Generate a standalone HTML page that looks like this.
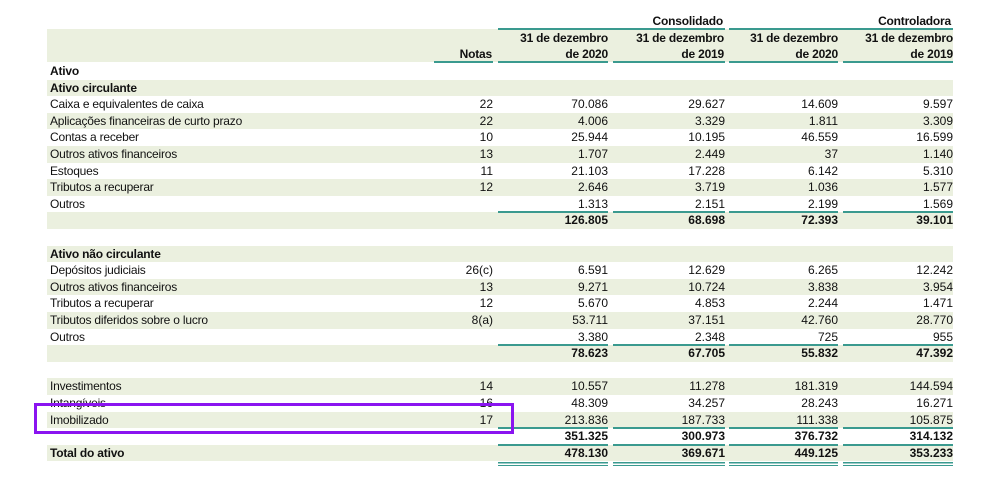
<!DOCTYPE html>
<html><head><meta charset="utf-8"><style>
*{margin:0;padding:0;box-sizing:border-box}
body{width:1000px;height:483px;background:#fff;font-family:"Liberation Sans",Arial,sans-serif;font-size:12px;color:#111;position:relative;overflow:hidden}
.r{position:absolute;left:47px;width:906px;height:16.6px;line-height:16.6px}
.g{background:#ebf0df}
.r span{position:absolute;top:0}
.l{left:3px;letter-spacing:-0.2px}
.n{right:460px;text-align:right}
.c1{right:345px}.c2{right:228px}.c3{right:115px}.c4{right:0}
b{font-weight:bold}
.ln{position:absolute;height:2px;background:#3a9a8f}
.hd{position:absolute;font-weight:bold;text-align:right;line-height:16px;letter-spacing:-0.2px}
</style></head><body>
<div style="position:absolute;left:47px;top:29px;width:906px;height:33px;background:#ebf0df"></div>
<div class="hd" style="right:277px;top:13px">Consolidado</div>
<div class="hd" style="right:49px;top:13px">Controladora</div>
<div class="ln" style="left:498px;width:227px;top:28px"></div>
<div class="ln" style="left:729px;width:224px;top:28px"></div>
<div class="hd" style="right:508px;top:46px">Notas</div>
<div class="hd" style="right:392px;top:30px">31 de dezembro<br>de 2020</div>
<div class="hd" style="right:276px;top:30px">31 de dezembro<br>de 2019</div>
<div class="hd" style="right:162px;top:30px">31 de dezembro<br>de 2020</div>
<div class="hd" style="right:47px;top:30px">31 de dezembro<br>de 2019</div>
<div class="ln" style="left:434px;width:59px;top:61px"></div>
<div class="ln" style="left:498px;width:110px;top:61px"></div>
<div class="ln" style="left:613px;width:112px;top:61px"></div>
<div class="ln" style="left:729px;width:109px;top:61px"></div>
<div class="ln" style="left:843px;width:110px;top:61px"></div>

<div class="r" style="top:63px"><span class="l"><b>Ativo</b></span></div>
<div class="r g" style="top:79.6px"><span class="l"><b>Ativo circulante</b></span></div>
<div class="r" style="top:96.2px"><span class="l">Caixa e equivalentes de caixa</span><span class="n">22</span><span class="c1">70.086</span><span class="c2">29.627</span><span class="c3">14.609</span><span class="c4">9.597</span></div>
<div class="r g" style="top:112.8px"><span class="l">Aplicações financeiras de curto prazo</span><span class="n">22</span><span class="c1">4.006</span><span class="c2">3.329</span><span class="c3">1.811</span><span class="c4">3.309</span></div>
<div class="r" style="top:129.4px"><span class="l">Contas a receber</span><span class="n">10</span><span class="c1">25.944</span><span class="c2">10.195</span><span class="c3">46.559</span><span class="c4">16.599</span></div>
<div class="r g" style="top:146px"><span class="l">Outros ativos financeiros</span><span class="n">13</span><span class="c1">1.707</span><span class="c2">2.449</span><span class="c3">37</span><span class="c4">1.140</span></div>
<div class="r" style="top:162.6px"><span class="l">Estoques</span><span class="n">11</span><span class="c1">21.103</span><span class="c2">17.228</span><span class="c3">6.142</span><span class="c4">5.310</span></div>
<div class="r g" style="top:179.2px"><span class="l">Tributos a recuperar</span><span class="n">12</span><span class="c1">2.646</span><span class="c2">3.719</span><span class="c3">1.036</span><span class="c4">1.577</span></div>
<div class="r" style="top:195.8px"><span class="l">Outros</span><span class="c1">1.313</span><span class="c2">2.151</span><span class="c3">2.199</span><span class="c4">1.569</span></div>
<div class="r g" style="top:212.4px"><b><span class="c1">126.805</span><span class="c2">68.698</span><span class="c3">72.393</span><span class="c4">39.101</span></b></div>
<div class="r" style="top:229px"></div>
<div class="r g" style="top:245.6px"><span class="l"><b>Ativo não circulante</b></span></div>
<div class="r" style="top:262.2px"><span class="l">Depósitos judiciais</span><span class="n">26(c)</span><span class="c1">6.591</span><span class="c2">12.629</span><span class="c3">6.265</span><span class="c4">12.242</span></div>
<div class="r g" style="top:278.8px"><span class="l">Outros ativos financeiros</span><span class="n">13</span><span class="c1">9.271</span><span class="c2">10.724</span><span class="c3">3.838</span><span class="c4">3.954</span></div>
<div class="r" style="top:295.4px"><span class="l">Tributos a recuperar</span><span class="n">12</span><span class="c1">5.670</span><span class="c2">4.853</span><span class="c3">2.244</span><span class="c4">1.471</span></div>
<div class="r g" style="top:312px"><span class="l">Tributos diferidos sobre o lucro</span><span class="n">8(a)</span><span class="c1">53.711</span><span class="c2">37.151</span><span class="c3">42.760</span><span class="c4">28.770</span></div>
<div class="r" style="top:328.6px"><span class="l">Outros</span><span class="c1">3.380</span><span class="c2">2.348</span><span class="c3">725</span><span class="c4">955</span></div>
<div class="r g" style="top:345.2px"><b><span class="c1">78.623</span><span class="c2">67.705</span><span class="c3">55.832</span><span class="c4">47.392</span></b></div>
<div class="r g" style="top:378.4px"><span class="l">Investimentos</span><span class="n">14</span><span class="c1">10.557</span><span class="c2">11.278</span><span class="c3">181.319</span><span class="c4">144.594</span></div>
<div class="r" style="top:395px"><span class="l">Intangíveis</span><span class="n">16</span><span class="c1">48.309</span><span class="c2">34.257</span><span class="c3">28.243</span><span class="c4">16.271</span></div>
<div class="r g" style="top:411.6px"><span class="l">Imobilizado</span><span class="n">17</span><span class="c1">213.836</span><span class="c2">187.733</span><span class="c3">111.338</span><span class="c4">105.875</span></div>
<div class="r" style="top:428.2px"><b><span class="c1">351.325</span><span class="c2">300.973</span><span class="c3">376.732</span><span class="c4">314.132</span></b></div>
<div class="r g" style="top:444.8px"><span class="l"><b>Total do ativo</b></span><b><span class="c1">478.130</span><span class="c2">369.671</span><span class="c3">449.125</span><span class="c4">353.233</span></b></div>

<div class="ln" style="left:498px;width:110px;top:211px"></div><div class="ln" style="left:613px;width:112px;top:211px"></div><div class="ln" style="left:729px;width:109px;top:211px"></div><div class="ln" style="left:843px;width:110px;top:211px"></div>
<div class="ln" style="left:498px;width:110px;top:344px"></div><div class="ln" style="left:613px;width:112px;top:344px"></div><div class="ln" style="left:729px;width:109px;top:344px"></div><div class="ln" style="left:843px;width:110px;top:344px"></div>
<div class="ln" style="left:498px;width:110px;top:427px"></div><div class="ln" style="left:613px;width:112px;top:427px"></div><div class="ln" style="left:729px;width:109px;top:427px"></div><div class="ln" style="left:843px;width:110px;top:427px"></div>
<div class="ln" style="left:498px;width:110px;top:443.5px"></div><div class="ln" style="left:613px;width:112px;top:443.5px"></div><div class="ln" style="left:729px;width:109px;top:443.5px"></div><div class="ln" style="left:843px;width:110px;top:443.5px"></div>
<div class="ln" style="left:498px;width:110px;top:462px;height:4px;border-bottom:1px solid #3a9a8f;background:linear-gradient(#3a9a8f 50%,#fff 50%)"></div><div class="ln" style="left:613px;width:112px;top:462px;height:4px;background:linear-gradient(#3a9a8f 50%,#fff 50%);border-bottom:1px solid #3a9a8f"></div><div class="ln" style="left:729px;width:109px;top:462px;height:4px;background:linear-gradient(#3a9a8f 50%,#fff 50%);border-bottom:1px solid #3a9a8f"></div><div class="ln" style="left:843px;width:110px;top:462px;height:4px;background:linear-gradient(#3a9a8f 50%,#fff 50%);border-bottom:1px solid #3a9a8f"></div>

<div style="position:absolute;left:34px;top:403px;width:480px;height:31px;border:3px solid #8a14f0"></div>
</body></html>
